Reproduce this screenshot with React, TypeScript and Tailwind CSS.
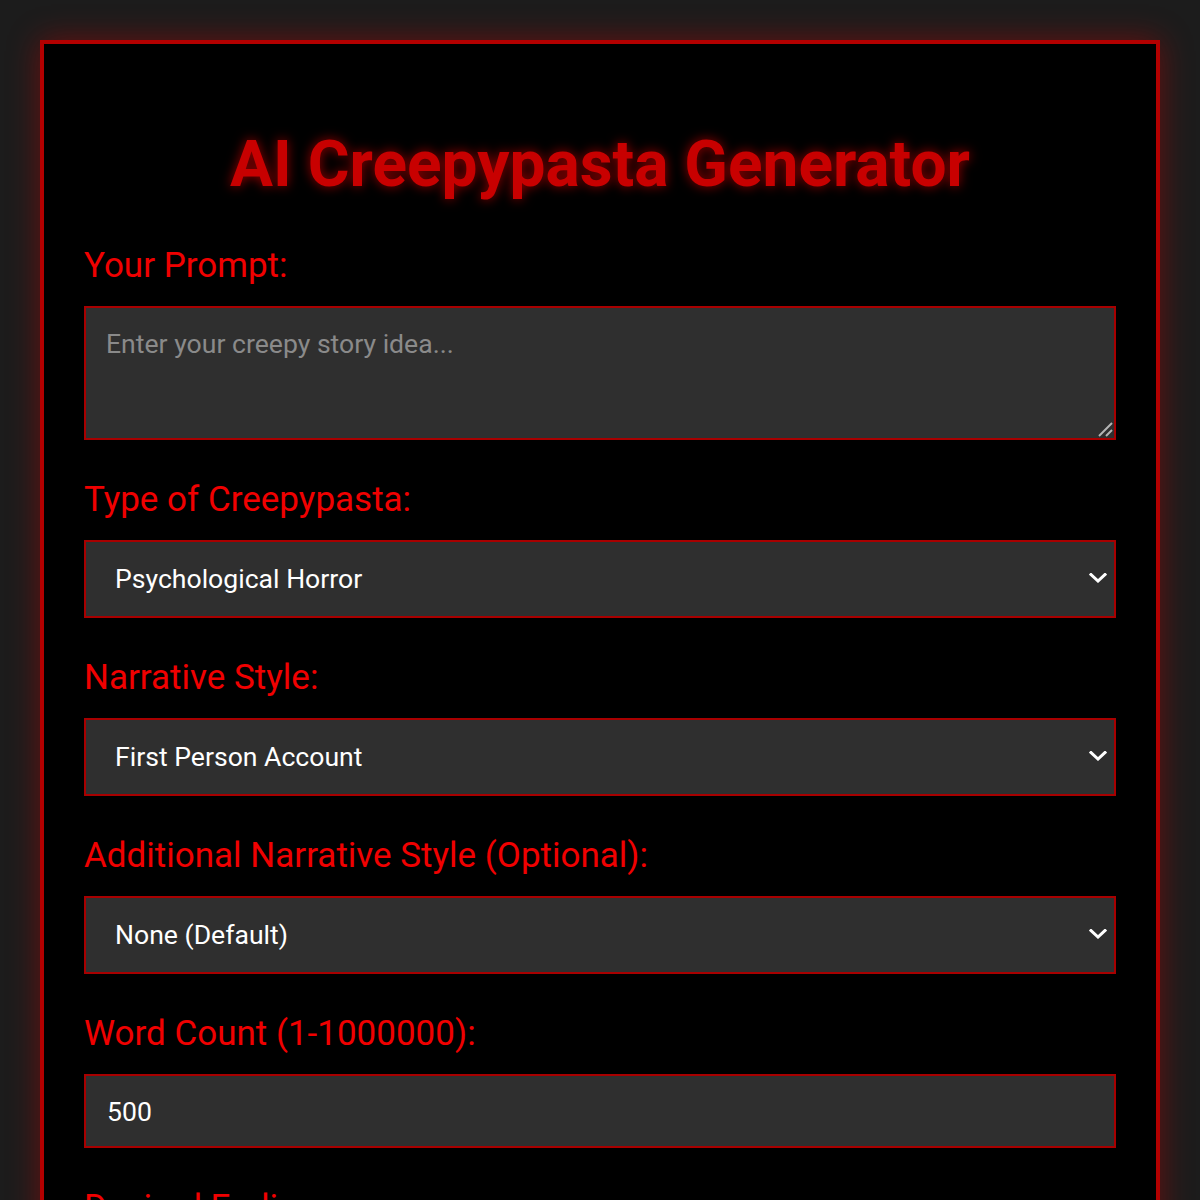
const storyTypes = ["Psychological Horror", "Supernatural", "Urban Legend", "Cosmic Horror"];
const narrativeStyles = ["First Person Account", "Third Person", "Found Footage", "Diary Entries"];
const extraStyles = ["None (Default)", "Unreliable Narrator", "Epistolary", "Stream of Consciousness"];

function Label({ children }: { children: React.ReactNode }) {
  return <label className="block text-[35px] leading-[42px] text-[#f00000] mb-[19px]">{children}</label>;
}

function Select({ options }: { options: string[] }) {
  return (
    <div className="relative">
      <select className="w-full h-[78px] appearance-none bg-[#2f2f2f] border-2 border-[#a80000] pl-[29px] pr-12 text-[26.6px] text-white outline-none">
        {options.map((o) => (
          <option key={o}>{o}</option>
        ))}
      </select>
      <svg
        viewBox="0 0 18 10"
        className="absolute right-[9px] top-1/2 -translate-y-[60%] w-[18px] h-[10px] pointer-events-none"
        fill="none"
        stroke="white"
        strokeWidth="3"
        strokeLinecap="square"
      >
        <polyline points="2,1.5 9,8 16,1.5" />
      </svg>
    </div>
  );
}

export default function App() {
  return (
    <div className="min-h-[1200px] bg-[#1c1c1c] pt-10 px-10 font-['Roboto',sans-serif]">
      <div className="bg-black border-4 border-[#b30000] shadow-[0_0_30px_rgba(200,0,0,0.45)] px-10 pt-[83px] pb-10">
        <h1 className="text-center text-[64px] leading-[76px] font-bold text-[#c80000] [text-shadow:0_0_12px_rgba(255,0,0,0.6)] mb-[42px]">
          AI Creepypasta Generator
        </h1>

        <div className="flex flex-col gap-[39px]">
          <div>
            <Label>Your Prompt:</Label>
            <div className="relative">
              <textarea
                placeholder="Enter your creepy story idea..."
                className="block w-full h-[134px] resize-none bg-[#2f2f2f] border-2 border-[#a80000] px-[20px] py-[16px] text-[26.6px] text-white placeholder:text-[#8a8a8a] outline-none"
              />
              {/* resize grip */}
              <svg
                viewBox="0 0 16 16"
                className="absolute right-[3px] bottom-[3px] w-4 h-4 pointer-events-none"
                stroke="#b5b5b5"
                strokeWidth="2"
              >
                <line x1="2" y1="15" x2="15" y2="2" />
                <line x1="9" y1="15" x2="15" y2="9" />
              </svg>
            </div>
          </div>

          <div>
            <Label>Type of Creepypasta:</Label>
            <Select options={storyTypes} />
          </div>

          <div>
            <Label>Narrative Style:</Label>
            <Select options={narrativeStyles} />
          </div>

          <div>
            <Label>Additional Narrative Style (Optional):</Label>
            <Select options={extraStyles} />
          </div>

          <div>
            <Label>Word Count (1-1000000):</Label>
            <input
              type="number"
              defaultValue={500}
              min={1}
              max={1000000}
              className="block w-full h-[74px] bg-[#2f2f2f] border-2 border-[#a80000] px-[21px] text-[26.6px] text-white outline-none"
            />
          </div>

          <div>
            <Label>Desired Ending:</Label>
            <Select options={["Open Ending", "Twist Ending", "Bad Ending"]} />
          </div>
        </div>
      </div>
    </div>
  );
}
